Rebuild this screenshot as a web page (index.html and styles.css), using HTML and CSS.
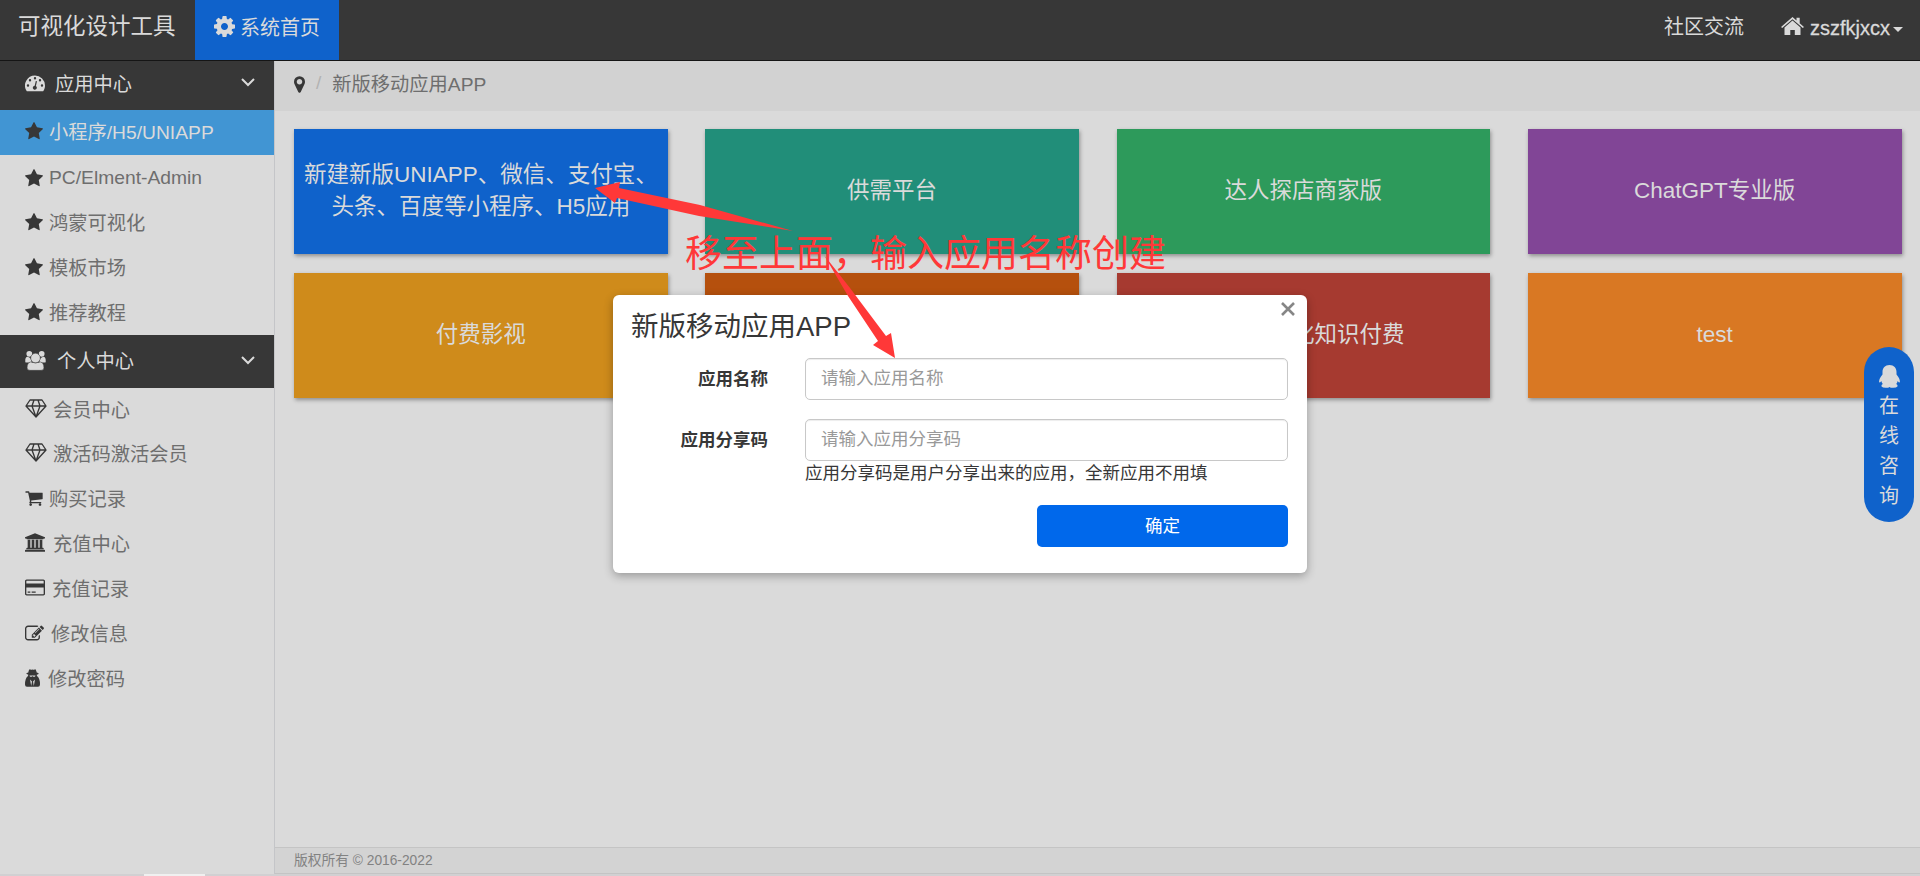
FILE: index.html
```html
<!DOCTYPE html>
<html lang="zh-CN">
<head>
<meta charset="utf-8">
<title>可视化设计工具</title>
<link rel="stylesheet" href="styles.css">
</head>
<body>
<svg class="defs" width="0" height="0">
  <symbol id="star" viewBox="0 0 1664 1664"><path d="M1664 615q0 22-26 48l-363 354 86 500q1 7 1 20 0 21-10.500 35.500t-30.500 14.500q-19 0-40-12l-449-236-449 236q-22 12-40 12-21 0-31.500-14.500t-10.500-35.500q0-6 2-20l86-500-364-354q-25-27-25-48 0-37 56-46l502-73 225-455q19-41 49-41t49 41l225 455 502 73q56 9 56 46z"/></symbol>
  <symbol id="cog" viewBox="128 128 1536 1536"><path d="M1152 896q0-106-75-181t-181-75-181 75-75 181 75 181 181 75 181-75 75-181zm512-109v222q0 12-8 23t-20 13l-185 28q-19 54-39 91 35 50 107 138 10 12 10 25t-9 23q-27 37-99 108t-94 71q-12 0-26-9l-138-108q-44 23-91 38-16 136-29 186-7 28-36 28h-222q-14 0-24.500-8.500t-11.500-21.500l-28-184q-49-16-90-37l-141 107q-10 9-25 9-14 0-25-11-126-114-165-168-7-10-7-23 0-12 8-23 15-21 51-66.500t54-70.500q-27-50-41-99l-183-27q-13-2-21-12.500t-8-23.500v-222q0-12 8-23t19-13l186-28q14-46 39-92-40-57-107-138-10-12-10-24 0-10 9-23 26-36 98.500-107.500t94.500-71.500q13 0 26 10l138 107q44-23 91-38 16-136 29-186 7-28 36-28h222q14 0 24.500 8.500t11.500 21.500l28 184q49 16 90 37l142-107q9-9 24-9 13 0 25 10 129 119 165 170 7 8 7 22 0 12-8 23-15 21-51 66.500t-54 70.500q26 50 41 98l183 28q13 2 21 12.500t8 23.500z"/></symbol>
  <symbol id="pin" viewBox="384 128 1024 1536"><path d="M1152 640q0-106-75-181t-181-75-181 75-75 181 75 181 181 75 181-75 75-181zm256 0q0 109-33 179l-364 774q-16 33-47.500 52t-67.500 19-67.500-19-46.500-52l-365-774q-33-70-33-179 0-212 150-362t362-150 362 150 150 362z"/></symbol>
  <symbol id="gauge" viewBox="0 0 20 17"><path fill-rule="evenodd" d="M10 .5a10 10 0 0 1 10 10c0 2-.5 3.700-1.500 5.300q-.3.500-.8.500H2.300q-.5 0-.8-.5A10 10 0 0 1 10 .5zM10 2a1.200 1.200 0 1 0 0 2.400A1.200 1.200 0 0 0 10 2zM5 4a1.200 1.200 0 1 0 0 2.400A1.200 1.200 0 0 0 5 4zm10 0a1.200 1.200 0 1 0 0 2.400A1.200 1.200 0 0 0 15 4zM3 9.300a1.200 1.200 0 1 0 0 2.400 1.200 1.200 0 0 0 0-2.400zm14 0a1.200 1.200 0 1 0 0 2.400 1.200 1.200 0 0 0 0-2.400zM10.800 6l-1.100 4.700a2 2 0 1 0 1.200.3L12 6.300z"/></symbol>
  <symbol id="users" viewBox="0 0 22 21"><circle cx="4.500" cy="3.500" r="3"/><circle cx="17.500" cy="3.500" r="3"/><path d="M.3 12C0 8 1 6.500 3 6.600q3 1 3.500 3.500l.5 2.400H2.500q-2 .2-2.200-.5zM21.700 12c.3-4-.7-5.500-2.700-5.400q-3 1-3.500 3.500l-.5 2.400h4.500q2 .2 2.200-.5z"/><g stroke="#373737" stroke-width=".5"><path d="M6 12q5 2.200 10 0 3.800.8 3.800 6 0 2.800-3 2.800H5.200q-3 0-3-2.800 0-5.200 3.800-6z"/><circle cx="11" cy="7.900" r="5"/></g></symbol>
  <symbol id="diamond" viewBox="0 0 22 19"><path fill="none" stroke="currentColor" stroke-width="1.350" stroke-linejoin="round" d="M5 1h12l4 6-10 11L1 7zM1 7h20M7 7l4 11 4-11M7 7l2-6M15 7l-2-6"/></symbol>
  <symbol id="cart" viewBox="64 128 1664 1536"><path d="M704 1536q0 52-38 90t-90 38-90-38-38-90 38-90 90-38 90 38 38 90zm896 0q0 52-38 90t-90 38-90-38-38-90 38-90 90-38 90 38 38 90zm128-1088v512q0 24-16.500 42.500t-40.500 21.500l-1044 122q13 60 13 70 0 16-24 64h920q26 0 45 19t19 45-19 45-45 19h-1024q-26 0-45-19t-19-45q0-11 8-31.500t16-36 21.500-40 15.500-29.500l-177-823h-204q-26 0-45-19t-19-45 19-45 45-19h256q16 0 28.500 6.500t19.500 15.500 13 24.500 8 26 5.500 29.500 4.500 26h1201q26 0 45 19t19 45z"/></symbol>
  <symbol id="bank" viewBox="0 0 1920 1792"><path d="M960 0l960 384v128h-128q0 26-20.500 45t-48.500 19h-1526q-28 0-48.500-19t-20.500-45h-128v-128zm-704 640h256v768h128v-768h256v768h128v-768h256v768h128v-768h256v768h59q28 0 48.500 19t20.500 45v64h-1664v-64q0-26 20.500-45t48.500-19h59v-768zm1595 960q28 0 48.500 19t20.500 45v128h-1920v-128q0-26 20.500-45t48.500-19h1782z"/></symbol>
  <symbol id="card" viewBox="0 128 1920 1536"><path d="M1760 128q66 0 113 47t47 113v1216q0 66-47 113t-113 47h-1600q-66 0-113-47t-47-113v-1216q0-66 47-113t113-47h1600zm-1600 128q-13 0-22.500 9.500t-9.500 22.500v224h1664v-224q0-13-9.500-22.500t-22.500-9.500h-1600zm1600 1280q13 0 22.500-9.500t9.500-22.500v-608h-1664v608q0 13 9.500 22.500t22.500 9.500h1600zm-1504-128v-128h256v128h-256zm384 0v-128h384v128h-384z"/></symbol>
  <symbol id="edit" viewBox="0 128 1792 1408"><path d="M888 1184l116-116-152-152-116 116v56h96v96h56zm440-720q-16-16-33 1l-350 350q-17 17-1 33t33-1l350-350q17-17 1-33zm80 594v190q0 119-84.500 203.500t-203.500 84.500h-832q-119 0-203.500-84.500t-84.500-203.500v-832q0-119 84.500-203.500t203.500-84.500h832q63 0 117 25 15 7 18 23 3 17-9 29l-49 49q-14 14-32 8-23-6-45-6h-832q-66 0-113 47t-47 113v832q0 66 47 113t113 47h832q66 0 113-47t47-113v-126q0-13 9-22l64-64q15-15 35-7t20 29zm-96-738l288 288-672 672h-288v-288zm444 132l-92 92-288-288 92-92q28-28 68-28t68 28l152 152q28 28 28 68t-28 68z"/></symbol>
  <symbol id="secret" viewBox="0 0 15 18"><path fill-rule="evenodd" d="M4.500.3q1.500.8 3 .1 1.500.7 3-.1 1 1.700 1.200 3.300 2 .5 2 1.100t-2 1.100l.3 1.200Q15 9 15 15.500q0 2.300-2 2.300H2q-2 0-2-2.300Q0 9 3 6.900l.3-1.200q-2-.5-2-1.100t2-1.100Q3.500 1.800 4.500.3zM5 10.500l1.200 6.500L7 12.500zm5 0l-2 2L8.800 17zM4.500 6.500l.5 1.300h1.800l.7-.8.700.8H10l.5-1.300z"/></symbol>
  <symbol id="home" viewBox="0 0 23 18"><path d="M11.500 0l4 3.500V.7h3.200v5.500L23 10l-1.200 1.100L11.500 2.200 1.200 11.100 0 10z"/><path d="M3.500 10.500l8-7 8 7V18h-5.700v-5H9.300v5H3.500z"/></symbol>
  <symbol id="qq" viewBox="0 0 21 23"><path d="M10.500 0c4.500 0 7 3.200 7 7v2.500q3.600 4.200 3.400 7.600-.5 1.300-2.200-1.100-.5 1.800-1.500 3 1.800.9 1.200 2.600-1 1.300-4.600 1.200-2.300-.1-3.300-.9-1 .8-3.300.9-3.600.1-4.600-1.200-.6-1.700 1.200-2.600-1-1.200-1.500-3Q.6 18.400.1 17.100-.1 13.700 3.500 9.500V7c0-3.800 2.500-7 7-7z"/></symbol>
  <symbol id="chev" viewBox="0 0 14 9"><path fill="none" stroke="currentColor" stroke-width="2" d="M1 1l6 6 6-6"/></symbol>
</svg>

<div class="app">
  <header class="topbar">
    <div class="brand">可视化设计工具</div>
    <a class="nav-active"><svg class="i-cog"><use href="#cog"/></svg><span>系统首页</span></a>
    <nav class="top-right">
      <a class="community">社区交流</a>
      <a class="user"><svg class="i-home"><use href="#home"/></svg><span>zszfkjxcx</span><i class="caret"></i></a>
    </nav>
  </header>

  <div class="body">
    <aside class="sidebar">
      <div class="group"><svg class="i-gauge"><use href="#gauge"/></svg><span>应用中心</span><svg class="i-chev"><use href="#chev"/></svg></div>
      <ul class="menu">
        <li class="active"><svg class="i-star"><use href="#star"/></svg>小程序/H5/UNIAPP</li>
        <li class="latin"><svg class="i-star"><use href="#star"/></svg>PC/Elment-Admin</li>
        <li><svg class="i-star"><use href="#star"/></svg>鸿蒙可视化</li>
        <li><svg class="i-star"><use href="#star"/></svg>模板市场</li>
        <li><svg class="i-star"><use href="#star"/></svg>推荐教程</li>
      </ul>
      <div class="group personal"><svg class="i-users"><use href="#users"/></svg><span>个人中心</span><svg class="i-chev"><use href="#chev"/></svg></div>
      <ul class="menu second">
        <li><svg class="i-diamond"><use href="#diamond"/></svg>会员中心</li>
        <li><svg class="i-diamond"><use href="#diamond"/></svg>激活码激活会员</li>
        <li><svg class="i-cart"><use href="#cart"/></svg>购买记录</li>
        <li><svg class="i-bank"><use href="#bank"/></svg>充值中心</li>
        <li><svg class="i-card"><use href="#card"/></svg>充值记录</li>
        <li><svg class="i-edit"><use href="#edit"/></svg>修改信息</li>
        <li><svg class="i-secret"><use href="#secret"/></svg>修改密码</li>
      </ul>
    </aside>

    <main class="main">
      <div class="crumbs"><svg class="i-pin"><use href="#pin"/></svg><span class="slash">/</span><span>新版移动应用APP</span></div>
      <div class="cards">
        <div class="tile blue">新建新版UNIAPP、微信、支付宝、<br>头条、百度等小程序、H5应用</div>
        <div class="tile teal">供需平台</div>
        <div class="tile green">达人探店商家版</div>
        <div class="tile purple">ChatGPT专业版</div>
        <div class="tile amber">付费影视</div>
        <div class="tile rust"></div>
        <div class="tile red">新版可视化知识付费</div>
        <div class="tile orange">test</div>
      </div>
      <footer class="footer">版权所有 © 2016-2022</footer>
    </main>
  </div>
  <div class="strip"><span class="strip-light"></span></div>
</div>

<div class="service"><svg class="i-qq"><use href="#qq"/></svg><span>在</span><span>线</span><span>咨</span><span>询</span></div>

<section class="modal">
  <svg class="close" viewBox="0 0 14 14"><path d="M1 1l12 12M13 1l-12 12"/></svg>
  <h4 class="modal-title">新版移动应用APP</h4>
  <div class="row"><label class="label">应用名称</label><input class="field" placeholder="请输入应用名称"></div>
  <div class="row"><label class="label">应用分享码</label><input class="field" placeholder="请输入应用分享码"></div>
  <p class="help">应用分享码是用户分享出来的应用，全新应用不用填</p>
  <button class="confirm">确定</button>
</section>

<div class="note">移至上面，输入应用名称创建</div>
<svg class="arrows" viewBox="0 0 1920 876"><path d="M595 188L620 182 619 188 700 205 793 231 699 216 617 198 615 203z"/><path d="M824 255L850 288 886 336 891 333 895 358 873 345 878 341 848 296z"/></svg>
</body>
</html>
```
FILE: styles.css
```css
* { box-sizing: border-box; }
body { margin: 0; overflow: hidden; background: #dadada; font-family: "Liberation Sans", Arial, "Noto Sans CJK SC", sans-serif; color: #373737; }
svg { fill: currentColor; flex: none; display: block; }
.defs { position: absolute; }
.app { display: flex; flex-direction: column; height: 876px; }

.topbar { display: flex; flex: none; height: 61px; background: #373737; border-bottom: 1px solid #151515; color: #dadada; }
.brand { width: 195px; padding-left: 18px; font-size: 22.5px; line-height: 54px; white-space: nowrap; }
.nav-active { display: flex; width: 144px; height: 60px; padding-left: 19px; background: #0f62cb; font-size: 20px; line-height: 57px; }
.i-cog { width: 21px; height: 21px; margin: 16px 5px 0 0; }
.top-right { display: flex; margin-left: auto; padding-right: 17px; font-size: 20px; line-height: 55px; }
.community { margin-right: 37px; }
.user { display: flex; line-height: 56px; -webkit-text-stroke: .3px currentColor; }
.i-home { width: 23px; height: 18px; margin: 17px 6px 0 0; }
.caret { margin: 27px 0 0 3px; height: 5px; border: 5px solid transparent; border-top-color: currentColor; border-bottom: 0; }

.body { display: flex; flex: 1; }
.sidebar { width: 275px; border-right: 1px solid #c4c5c8; font-size: 19.25px; }
.group { display: flex; align-items: center; height: 49px; padding: 0 19px 6px 25px; background: #373737; color: #dadada; }
.group .i-chev { width: 14px; height: 9px; margin-left: auto; }
.i-gauge { width: 20px; height: 17px; margin: 2px 10px 0 0; }
.i-users { width: 21px; height: 21px; margin-right: 11px; }
.personal { height: 53px; padding-bottom: 3px; }
.menu { margin: 0; padding: 0; list-style: none; color: #6e6e6e; }
.menu li { display: flex; align-items: center; height: 45px; padding: 0 0 2px 25px; white-space: nowrap; }
.menu svg { color: #373737; }
.menu .active { padding-bottom: 3px; background: #4195d3; color: #dadada; }
.menu .latin { padding-bottom: 0; }
.second li:first-child { height: 43px; }
.i-star { width: 18px; height: 18px; margin-right: 6px; }
.i-diamond { width: 22px; height: 19px; margin-right: 6px; }
.i-cart { width: 18px; height: 16px; margin-right: 6px; }
.i-bank { width: 20px; height: 19px; margin-right: 8px; }
.i-card { width: 20px; height: 17px; margin-right: 7px; }
.i-edit { width: 19px; height: 16px; margin-right: 7px; }
.i-secret { width: 15px; height: 18px; margin-right: 8px; }

.main { display: flex; flex: 1; flex-direction: column; }
.crumbs { display: flex; align-items: center; height: 50px; padding: 0 0 6px 19px; background: #d2d2d2; color: #6e6e6e; font-size: 19.25px; }
.i-pin { width: 11px; height: 17px; margin-top: 2px; color: #373737; }
.slash { margin: 0 11px 0 11px; color: #b3b3b3; }
.cards { display: grid; grid-template-columns: repeat(4, 1fr); grid-auto-rows: 125px; gap: 19px 37.5px; padding: 18px 18.5px 0 19px; }
.tile { display: flex; align-items: center; justify-content: center; text-align: center; color: #dadada; font-size: 22.5px; line-height: 32px; white-space: nowrap; padding-bottom: 1px; box-shadow: 1px 2px 4px rgba(0, 0, 0, .35); }
.blue { background: #0f62cb; }
.teal { background: #218e79; }
.green { background: #2d9a5b; }
.purple { background: #814596; }
.amber { background: #cf8b1b; }
.rust { background: #b5500d; }
.red { background: #a63a30; }
.orange { background: #d97823; }
.footer { height: 27px; margin-top: auto; padding-left: 19px; background: #d3d3d3; border: 1px solid #c4c4c4; border-width: 1px 0; color: #828282; font-size: 13.75px; line-height: 25px; }
.strip { flex: none; height: 2px; padding-left: 144px; background: #d1d0d2; }
.strip-light { display: block; width: 61px; height: 2px; background: #f0f0f0; }

.service { position: absolute; left: 1864px; top: 347px; width: 50px; height: 175px; padding-top: 18px; border-radius: 25px; background: #0f62cb; color: #dadada; display: flex; flex-direction: column; align-items: center; font-size: 20px; line-height: 30px; }
.i-qq { width: 21px; height: 23px; margin-bottom: 3px; }

.modal { position: absolute; left: 613px; top: 295px; width: 694px; height: 278px; padding: 13px 19px 0 18px; border-radius: 6px; background: #fff; box-shadow: 0 3px 10px rgba(0, 0, 0, .3); font-size: 17.5px; }
.close { position: absolute; right: 12px; top: 7px; width: 14px; height: 14px; stroke: #868686; stroke-width: 2.6; }
.modal-title { margin: 0 0 12px; font-size: 27.5px; font-weight: 400; line-height: 38px; }
.row { display: flex; height: 42px; margin-bottom: 19px; }
.label { width: 137px; margin-right: 37px; text-align: right; font-weight: 700; line-height: 42px; }
.field { flex: 1; min-width: 0; padding: 0 15px 1px; border: 1px solid #c8c8c8; border-radius: 5px; font: inherit; box-shadow: inset 0 1px 1px rgba(0, 0, 0, .075); }
.field::placeholder { color: #999; opacity: 1; }
.help { margin: -19px 0 0 174px; height: 44px; line-height: 25px; }
.confirm { display: block; width: 251px; height: 42px; margin-left: auto; border: 0; border-radius: 5px; background: #0068eb; color: #fff; font: inherit; padding: 0 0 3px; }

.note { position: absolute; left: 685px; top: 229px; font-size: 37px; line-height: 52px; color: #ff3838; white-space: nowrap; }
.arrows { position: absolute; left: 0; top: 0; width: 1920px; height: 876px; fill: #ff3838; pointer-events: none; }
```
